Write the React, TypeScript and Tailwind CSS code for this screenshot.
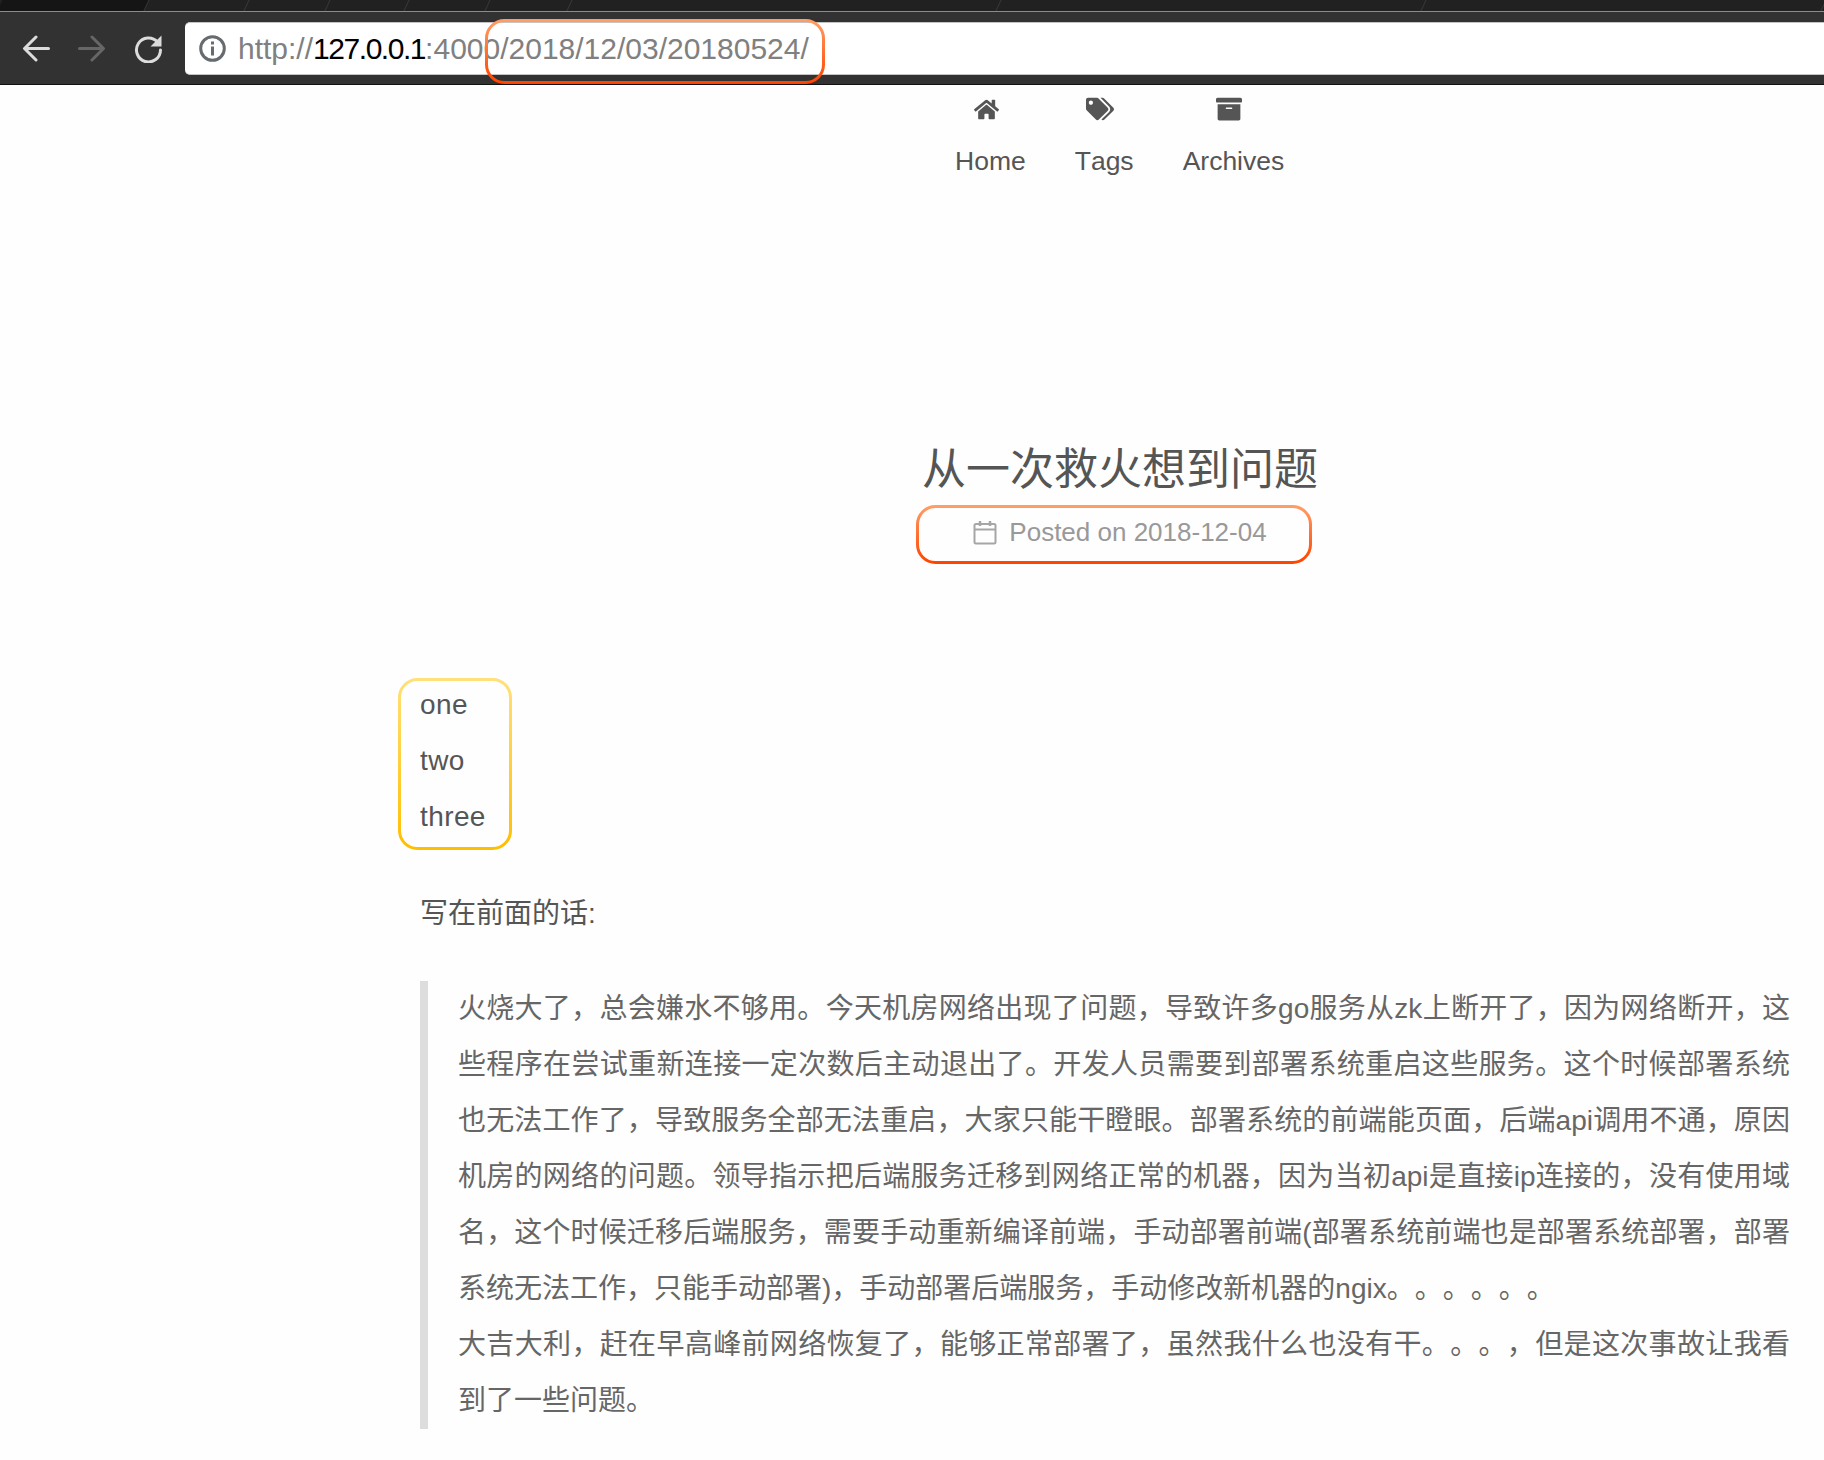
import { FaHome, FaTags, FaArchive } from "react-icons/fa";

const tabs = [147, 100, 81, 79, 81, 82, 429, 425, 400];

function Ring({ className, id, from, to, w, h }: { className: string; id: string; from: string; to: string; w: number; h: number }) {
  return (
    <svg className={"absolute " + className} width={w} height={h} viewBox={`0 0 ${w} ${h}`} fill="none">
      <defs>
        <linearGradient id={id} x1="0" y1="0" x2="0" y2="1">
          <stop offset="0" stopColor={from} />
          <stop offset="1" stopColor={to} />
        </linearGradient>
      </defs>
      <rect x="1.500" y="1.500" width={w - 3} height={h - 3} rx="18" stroke={`url(#${id})`} strokeWidth="3" />
    </svg>
  );
}

function NavItem({ icon, label }: { icon: React.ReactNode; label: string }) {
  return (
    <a className="flex flex-col items-center text-[26.500px] leading-[40px] text-[#555] [font-kerning:none]">
      <span className="mr-2 flex h-[24px] items-center text-[#555]">{icon}</span>
      <span className="mt-[20px]">{label}</span>
    </a>
  );
}

export default function App() {
  return (
    <div className="relative h-[1460px] w-[1824px] overflow-hidden bg-[#fefefe] font-['Liberation_Sans','Noto_Sans_CJK_SC',sans-serif] text-[28px] leading-[56px] text-[#555] [text-spacing-trim:space-all]">
      {/* browser chrome */}
      <div className="flex h-[11px] bg-[#212121]">
        {tabs.map((w, i) => (
          <div
            key={i}
            style={{ width: w }}
            className={
              "h-full shrink-0 border-r border-[#3a3a3a] -skew-x-[25deg] " +
              (i === 0 ? "bg-[#151515]" : "")
            }
          />
        ))}
      </div>
      <div className="h-px bg-[#8c8c8c]" />
      <div className="flex h-[73px] items-start border-b border-[#111] bg-[#323232] pt-[9.5px]">
        <svg className="ml-[22px] mt-[13px]" width="28" height="27" viewBox="0 0 28 27" fill="none" stroke="#dcdcdc" strokeWidth="3" strokeLinecap="round" strokeLinejoin="round">
          <path d="M26.500 13.500H3M14 2 2.500 13.500 14 25" />
        </svg>
        <svg className="ml-[28px] mt-[13px]" width="28" height="27" viewBox="0 0 28 27" fill="none" stroke="#666" strokeWidth="3" strokeLinecap="round" strokeLinejoin="round">
          <path d="M1.500 13.500H25M14 2l11.500 11.500L14 25" />
        </svg>
        <svg className="ml-[28px] mt-[13px]" width="30" height="28" viewBox="0 0 30 28" fill="none">
          <path d="M23.500 7A12 12 0 1 0 26.500 15" stroke="#dcdcdc" strokeWidth="3" strokeLinecap="round" />
          <path d="M27.500 0.500V11.500H16.500Z" fill="#dcdcdc" />
        </svg>
        <div className="ml-[21px] flex h-[53px] flex-1 items-center rounded-l-[5px] border-y border-[#c4c4c4] bg-white pl-[14px]">
          <svg width="27" height="27" viewBox="0 0 27 27" fill="none">
            <circle cx="13.500" cy="13.500" r="11.800" stroke="#666b70" strokeWidth="3" />
            <rect x="12" y="11.500" width="3" height="9" fill="#666b70" />
            <rect x="12" y="6.500" width="3" height="3" fill="#666b70" />
          </svg>
          <span className="ml-[12px] mt-[2px] whitespace-nowrap text-[30px] leading-[40px] text-[#808080]">
            http://<span className="tracking-[-1.450px] text-black">127.0.0.1</span>:4000/2018/12/03/20180524/
          </span>
        </div>
      </div>

      {/* site nav */}
      <nav className="flex gap-[49px] pl-[955px] pt-[12px]">
        <NavItem icon={<FaHome size={25} />} label="Home" />
        <NavItem icon={<FaTags size={28} />} label="Tags" />
        <NavItem icon={<FaArchive size={26} />} label="Archives" />
      </nav>

      <main className="ml-[420px] w-[1400px]">
        {/* post header */}
        <header className="mt-[259px] flex flex-col items-center">
          <h1 className="text-[44px] font-normal leading-[60px] text-[#555]">从一次救火想到问题</h1>
          <div className="mt-[10px] flex items-center text-[26px] leading-[44px] text-[#999]">
            <svg className="mr-[12px]" width="24" height="25" viewBox="0 0 24 25" fill="none" stroke="#a6a6a6" strokeWidth="2">
              <rect x="1.500" y="4" width="21" height="19.500" rx="1.500" />
              <path d="M1.500 9.500H22.500" />
              <path d="M7 1v5M17 1v5" strokeWidth="2.500" />
            </svg>
            <span>Posted on 2018-12-04</span>
          </div>
        </header>

        {/* post body */}
        <ul className="mt-[123px] tracking-[0.4px]">
          <li>one</li>
          <li>two</li>
          <li>three</li>
        </ul>
        <p className="mt-[41px]">写在前面的话:</p>
        <blockquote className="mt-[39px] w-[1370px] border-l-[8px] border-[#ddd] pl-[30px] text-justify text-[#666]">
          火烧大了，总会嫌水不够用。今天机房网络出现了问题，导致许多go服务从zk上断开了，因为网络断开，这些程序在尝试重新连接一定次数后主动退出了。开发人员需要到部署系统重启这些服务。这个时候部署系统也无法工作了，导致服务全部无法重启，大家只能干瞪眼。部署系统的前端能页面，后端api调用不通，原因机房的网络的问题。领导指示把后端服务迁移到网络正常的机器，因为当初api是直接ip连接的，没有使用域名，这个时候迁移后端服务，需要手动重新编译前端，手动部署前端(部署系统前端也是部署系统部署，部署系统无法工作，只能手动部署)，手动部署后端服务，手动修改新机器的ngix。。。。。。
          <br />
          大吉大利，赶在早高峰前网络恢复了，能够正常部署了，虽然我什么也没有干。。。，但是这次事故让我看到了一些问题。
        </blockquote>
      </main>

      {/* annotations */}
      <Ring id="a" w={340} h={65} from="#ff9d66" to="#ff4500" className="left-[485px] top-[19px]" />
      <Ring id="b" w={396} h={59} from="#ff9d66" to="#ff4500" className="left-[916px] top-[505px]" />
      <Ring id="c" w={114} h={172} from="#ffe07a" to="#ffbe00" className="left-[398px] top-[678px]" />
    </div>
  );
}
